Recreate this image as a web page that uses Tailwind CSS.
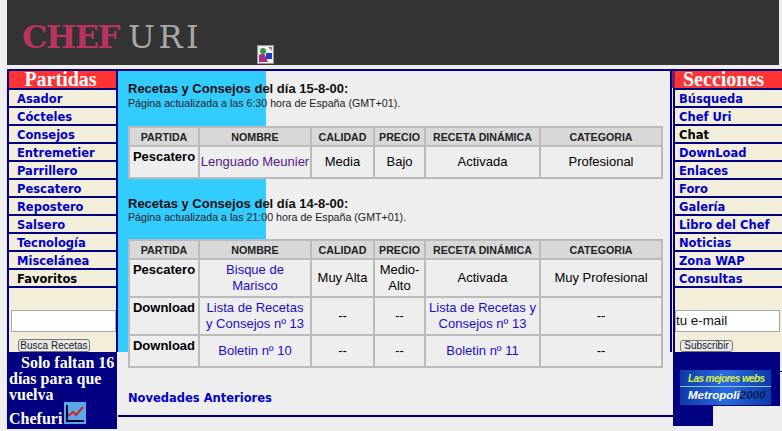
<!DOCTYPE html>
<html lang="es">
<head>
  <meta charset="UTF-8"/>
  <title>Chef Uri</title>
  <script src="https://cdn.jsdelivr.net/npm/@tailwindcss/browser@4"></script>
</head>
<body class="w-[782px] h-[431px] overflow-hidden bg-[#eeeeee] font-['Liberation_Sans',sans-serif]">
  <!-- Cabecera -->
  <div class="relative ml-[7px] w-[772px] h-[65px] bg-[#333333]">
    <div class="absolute left-[15px] top-[19px] flex font-['DejaVu_Serif',serif] text-[32px] leading-[36px]">
      <span class="w-[106px] font-bold tracking-[-1.5px] text-[#b8335f]">CHEF</span>
      <span class="tracking-[3.5px] text-[#a8a8a8]">URI</span>
    </div>
    <div class="absolute left-[250px] top-[45px] w-[17px] h-[19px] bg-[#e8e8e8] border border-[#999] flex items-center justify-center">
      <svg width="13" height="15" viewBox="0 0 13 15"><rect width="13" height="15" fill="#f4f4f4"/><path d="M0 15V8l5-2 4 9z" fill="#a0308a"/><circle cx="4" cy="4" r="3" fill="#3c9a3c"/><rect x="7" y="6" width="6" height="6" fill="#1b3fc4"/><path d="M9 0h4v4z" fill="#888"/></svg>
    </div>
  </div>

  <div class="flex mt-[4px]">
    <!-- Partidas -->
    <aside class="ml-[7px] w-[111px] shrink-0">
      <div class="h-[283px] bg-[#f2eeda] border-x-2 border-[#000080]">
        <div class="h-[21px] bg-[#ff3333] border-y-2 border-[#000080] text-white font-bold text-[20px] leading-[17px] text-center font-['Liberation_Serif',serif] pr-[4px]">Partidas</div>
        <nav class="font-['DejaVu_Sans',sans-serif] font-bold text-[11.5px] text-[#0000cc]">
          <a class="block h-[18px] leading-[18px] pl-[8px] border-b-2 border-[#000080]">Asador</a>
          <a class="block h-[18px] leading-[18px] pl-[8px] border-b-2 border-[#000080]">Cócteles</a>
          <a class="block h-[18px] leading-[18px] pl-[8px] border-b-2 border-[#000080]">Consejos</a>
          <a class="block h-[18px] leading-[18px] pl-[8px] border-b-2 border-[#000080]">Entremetier</a>
          <a class="block h-[18px] leading-[18px] pl-[8px] border-b-2 border-[#000080]">Parrillero</a>
          <a class="block h-[18px] leading-[18px] pl-[8px] border-b-2 border-[#000080]">Pescatero</a>
          <a class="block h-[18px] leading-[18px] pl-[8px] border-b-2 border-[#000080]">Repostero</a>
          <a class="block h-[18px] leading-[18px] pl-[8px] border-b-2 border-[#000080]">Salsero</a>
          <a class="block h-[18px] leading-[18px] pl-[8px] border-b-2 border-[#000080]">Tecnología</a>
          <a class="block h-[18px] leading-[18px] pl-[8px] border-b-2 border-[#000080]">Miscelánea</a>
          <a class="block h-[18px] leading-[18px] pl-[8px] border-b-2 border-[#000080] text-black">Favoritos</a>
        </nav>
        <div class="pt-[22px]">
          <div class="h-[22px] ml-[2px] bg-white border border-[#aaa]"></div>
          <button class="block ml-[9px] mt-[7px] w-[72px] h-[13px] rounded-[3px] border border-[#777] bg-[#e8e8e8] text-[10px] leading-[11px] text-[#222]">Busca Recetas</button>
        </div>
      </div>
      <div class="w-[110px] h-[77px] bg-[#000080] text-white font-bold font-['Liberation_Serif',serif] text-[16px] leading-[16px] pl-[2px] pt-[3px]">
        <span class="pl-[12px]">Solo faltan 16</span><br/>días para que<br/>vuelva<br/>
        <span class="flex items-end mt-[-1px]">Chefuri
          <svg class="ml-[2px] mb-[3px]" width="22" height="22" viewBox="0 0 22 22"><rect width="22" height="22" fill="#5aa8e8"/><path d="M3 3v16h17" fill="none" stroke="#003" stroke-width="2"/><path d="M4 14l5-4 3 3 7-8" fill="none" stroke="#d22" stroke-width="2"/></svg>
        </span>
      </div>
    </aside>

    <!-- Contenido -->
    <main class="relative w-[555px] h-[348px] shrink-0 border-y-2 border-[#000080]">
      <div class="absolute left-0 top-0 w-[148px] h-[281px] bg-[#33ccff]"></div>
      <div class="absolute right-[1px] top-0 w-[2px] h-[281px] bg-[#000080]"></div>
      <div class="relative pl-[10px] pt-[11px] text-black">
        <h2 class="font-bold text-[13px] leading-[14px] text-[#101010]">Recetas y Consejos del día 15-8-00:</h2>
        <p class="text-[10.67px] leading-[15px] text-[#222]">Página actualizada a las 6:30 hora de España (GMT+01).</p>
        <table class="mt-[15px] w-[535px] border-collapse text-[13px] leading-[16px] text-center border-2 border-[#bbb] bg-[#eeeeee] table-fixed">
          <tr class="bg-[#d8d8d8] text-[10.67px] font-bold h-[19px] text-[#222]">
            <td class="border-2 border-[#bbb] w-[70px]">PARTIDA</td>
            <td class="border-2 border-[#bbb] w-[112px]">NOMBRE</td>
            <td class="border-2 border-[#bbb] w-[63px]">CALIDAD</td>
            <td class="border-2 border-[#bbb] w-[51px]">PRECIO</td>
            <td class="border-2 border-[#bbb] w-[115px]">RECETA DINÁMICA</td>
            <td class="border-2 border-[#bbb]">CATEGORIA</td>
          </tr>
          <tr class="h-[32px]">
            <td class="border-2 border-[#bbb] font-bold align-top pt-[2px] whitespace-nowrap">Pescatero</td>
            <td class="border-2 border-[#bbb] text-[#551a8b] whitespace-nowrap">Lenguado Meunier</td>
            <td class="border-2 border-[#bbb]">Media</td>
            <td class="border-2 border-[#bbb]">Bajo</td>
            <td class="border-2 border-[#bbb]">Activada</td>
            <td class="border-2 border-[#bbb]">Profesional</td>
          </tr>
        </table>
        <h2 class="mt-[18px] font-bold text-[13px] leading-[14px] text-[#101010]">Recetas y Consejos del día 14-8-00:</h2>
        <p class="text-[10.67px] leading-[13px] text-[#222]">Página actualizada a las 21:00 hora de España (GMT+01).</p>
        <table class="mt-[15px] w-[535px] border-collapse text-[13px] leading-[16px] text-center border-2 border-[#bbb] bg-[#eeeeee] table-fixed">
          <tr class="bg-[#d8d8d8] text-[10.67px] font-bold h-[19px] text-[#222]">
            <td class="border-2 border-[#bbb] w-[70px]">PARTIDA</td>
            <td class="border-2 border-[#bbb] w-[112px]">NOMBRE</td>
            <td class="border-2 border-[#bbb] w-[63px]">CALIDAD</td>
            <td class="border-2 border-[#bbb] w-[51px]">PRECIO</td>
            <td class="border-2 border-[#bbb] w-[115px]">RECETA DINÁMICA</td>
            <td class="border-2 border-[#bbb]">CATEGORIA</td>
          </tr>
          <tr class="h-[38px]">
            <td class="border-2 border-[#bbb] font-bold align-top pt-[2px] whitespace-nowrap">Pescatero</td>
            <td class="border-2 border-[#bbb] text-[#1a0dcc]">Bisque de<br/>Marisco</td>
            <td class="border-2 border-[#bbb] whitespace-nowrap">Muy Alta</td>
            <td class="border-2 border-[#bbb]">Medio-<br/>Alto</td>
            <td class="border-2 border-[#bbb]">Activada</td>
            <td class="border-2 border-[#bbb]">Muy Profesional</td>
          </tr>
          <tr class="h-[38px]">
            <td class="border-2 border-[#bbb] font-bold align-top pt-[2px] whitespace-nowrap">Download</td>
            <td class="border-2 border-[#bbb] text-[#1a0dcc]">Lista de Recetas<br/>y Consejos nº 13</td>
            <td class="border-2 border-[#bbb]">--</td>
            <td class="border-2 border-[#bbb]">--</td>
            <td class="border-2 border-[#bbb] text-[#1a0dcc]">Lista de Recetas y<br/>Consejos nº 13</td>
            <td class="border-2 border-[#bbb]">--</td>
          </tr>
          <tr class="h-[32px]">
            <td class="border-2 border-[#bbb] font-bold align-top pt-[2px] whitespace-nowrap">Download</td>
            <td class="border-2 border-[#bbb] text-[#1a0dcc]">Boletin nº 10</td>
            <td class="border-2 border-[#bbb]">--</td>
            <td class="border-2 border-[#bbb]">--</td>
            <td class="border-2 border-[#bbb] text-[#1a0dcc]">Boletin nº 11</td>
            <td class="border-2 border-[#bbb]">--</td>
          </tr>
        </table>
        <a class="block mt-[23px] font-['DejaVu_Sans',sans-serif] font-bold text-[11.5px] leading-[14px] text-[#0000cc]">Novedades Anteriores</a>
      </div>
    </main>

    <!-- Secciones -->
    <aside class="relative w-[109px] shrink-0">
      <div class="absolute left-[-1px] top-[2px] w-[3px] h-[17px] bg-[#802060]"></div>
      <div class="h-[283px] bg-[#f2eeda] border-l-2 border-[#000080]">
        <div class="h-[21px] bg-[#ff3333] border-y-2 border-[#000080] text-white font-bold text-[20px] leading-[17px] font-['Liberation_Serif',serif] pl-[8px]">Secciones</div>
        <nav class="font-['DejaVu_Sans',sans-serif] font-bold text-[11.5px] text-[#0000cc]">
          <a class="block h-[18px] leading-[18px] pl-[4px] border-b-2 border-[#000080]">Búsqueda</a>
          <a class="block h-[18px] leading-[18px] pl-[4px] border-b-2 border-[#000080]">Chef Uri</a>
          <a class="block h-[18px] leading-[18px] pl-[4px] border-b-2 border-[#000080] text-black">Chat</a>
          <a class="block h-[18px] leading-[18px] pl-[4px] border-b-2 border-[#000080]">DownLoad</a>
          <a class="block h-[18px] leading-[18px] pl-[4px] border-b-2 border-[#000080]">Enlaces</a>
          <a class="block h-[18px] leading-[18px] pl-[4px] border-b-2 border-[#000080]">Foro</a>
          <a class="block h-[18px] leading-[18px] pl-[4px] border-b-2 border-[#000080]">Galería</a>
          <a class="block h-[18px] leading-[18px] pl-[4px] border-b-2 border-[#000080]">Libro del Chef</a>
          <a class="block h-[18px] leading-[18px] pl-[4px] border-b-2 border-[#000080]">Noticias</a>
          <a class="block h-[18px] leading-[18px] pl-[4px] border-b-2 border-[#000080]">Zona WAP</a>
          <a class="block h-[18px] leading-[18px] pl-[4px] border-b-2 border-[#000080]">Consultas</a>
        </nav>
        <div class="pt-[22px]">
          <div class="h-[22px] w-[105px] bg-white border border-[#aaa] text-[13.33px] leading-[20px] text-[#111]">tu e-mail</div>
          <button class="block ml-[5px] mt-[8px] w-[53px] h-[12px] rounded-[3px] border border-[#777] bg-[#e8e8e8] text-[10px] leading-[10px] text-[#222]">Subscribir</button>
        </div>
      </div>
      <div class="w-[107px] h-[54px] bg-[#000080] pt-[18px] pl-[7px]">
        <div class="w-[91px] h-[35px] bg-gradient-to-r from-[#0c3aa8] via-[#2a6ae0] to-[#0c3aa8] italic font-bold leading-[15px] pl-[8px] pt-[1px] text-white">
          <div class="-ml-[8px] pl-[8px] h-[16px] border-b border-[#9ac0f0] text-[10px] tracking-[-0.6px] text-[#d8f040]">Las mejores webs</div>
          <div class="pt-[1px] text-[11.5px]">Metropoli<span class="text-[#0a1a50]">2000</span></div>
        </div>
      </div>
      <div class="w-[40px] h-[20px] bg-[#000080]"></div>
      <div class="absolute left-[107px] top-[302px] w-[2px] h-px bg-[#000080]"></div>
    </aside>
  </div>
</body>
</html>
